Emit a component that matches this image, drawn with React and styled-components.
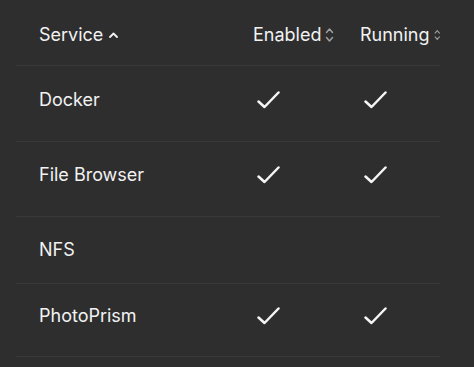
import React from "react"
import styled, { createGlobalStyle } from "styled-components"

const GlobalStyle = createGlobalStyle`
  html, body {
    margin: 0;
    padding: 0;
    background: #2e2e2e;
  }
  body {
    font-family: Inter, "Noto Sans", sans-serif;
    color: #f2f2f2;
  }
`

const Page = styled.div`
  width: 474px;
  height: 367px;
  overflow: hidden;
  background: #2e2e2e;
`

const Table = styled.div`
  width: 424px;
  margin-left: 16px;
`

const Row = styled.div`
  display: grid;
  grid-template-columns: 214px 107px 103px;
  align-items: center;
  height: ${(p) => p.$height}px;
  padding-bottom: ${(p) => p.$lift || 0}px;
  border-bottom: 1px solid #393939;
  box-sizing: border-box;
`

const Cell = styled.div`
  padding-left: 23px;
  font-size: 18px;
  line-height: 22px;
  display: flex;
  align-items: center;
  white-space: nowrap;
`

const HeaderCell = styled(Cell)`
  padding-top: 5px;
  gap: ${(p) => (p.$active ? "6px" : "4px")};
`

const CheckWrap = styled.span`
  display: inline-flex;
  margin-left: 4px;
`

const SortArrow = ({ active }) =>
  active ? (
    <svg width="9" height="6" viewBox="0 0 9 6" fill="none">
      <polyline
        points="1,5 4.5,1.5 8,5"
        stroke="#f2f2f2"
        strokeWidth="1.8"
        strokeLinecap="round"
        strokeLinejoin="round"
      />
    </svg>
  ) : (
    <svg width="9" height="16" viewBox="0 0 9 16" fill="none">
      <polyline
        points="1.5,5.5 4.5,2 7.5,5.5"
        stroke="#a0a0a0"
        strokeWidth="1.5"
        strokeLinecap="round"
        strokeLinejoin="round"
      />
      <polyline
        points="1.5,10.5 4.5,14 7.5,10.5"
        stroke="#a0a0a0"
        strokeWidth="1.5"
        strokeLinecap="round"
        strokeLinejoin="round"
      />
    </svg>
  )

const Check = () => (
  <CheckWrap>
    <svg width="23" height="18" viewBox="0 0 23 18" fill="none">
      <polyline
        points="1.5,10.5 7.5,16 21.5,1.5"
        stroke="#f5f5f5"
        strokeWidth="2.5"
        strokeLinecap="round"
        strokeLinejoin="round"
      />
    </svg>
  </CheckWrap>
)

const services = [
  { name: "Docker", enabled: true, running: true, height: 76, lift: 7 },
  { name: "File Browser", enabled: true, running: true, height: 75, lift: 9 },
  { name: "NFS", enabled: false, running: false, height: 67, lift: 0 },
  { name: "PhotoPrism", enabled: true, running: true, height: 73, lift: 9 },
]

export default function App() {
  return (
    <Page>
      <GlobalStyle />
      <Table>
        <Row $height={66}>
          <HeaderCell $active>
            Service <SortArrow active />
          </HeaderCell>
          <HeaderCell>
            Enabled <SortArrow />
          </HeaderCell>
          <HeaderCell>
            Running <SortArrow />
          </HeaderCell>
        </Row>
        {services.map((s) => (
          <Row key={s.name} $height={s.height} $lift={s.lift}>
            <Cell>{s.name}</Cell>
            <Cell>{s.enabled && <Check />}</Cell>
            <Cell>{s.running && <Check />}</Cell>
          </Row>
        ))}
      </Table>
    </Page>
  )
}
